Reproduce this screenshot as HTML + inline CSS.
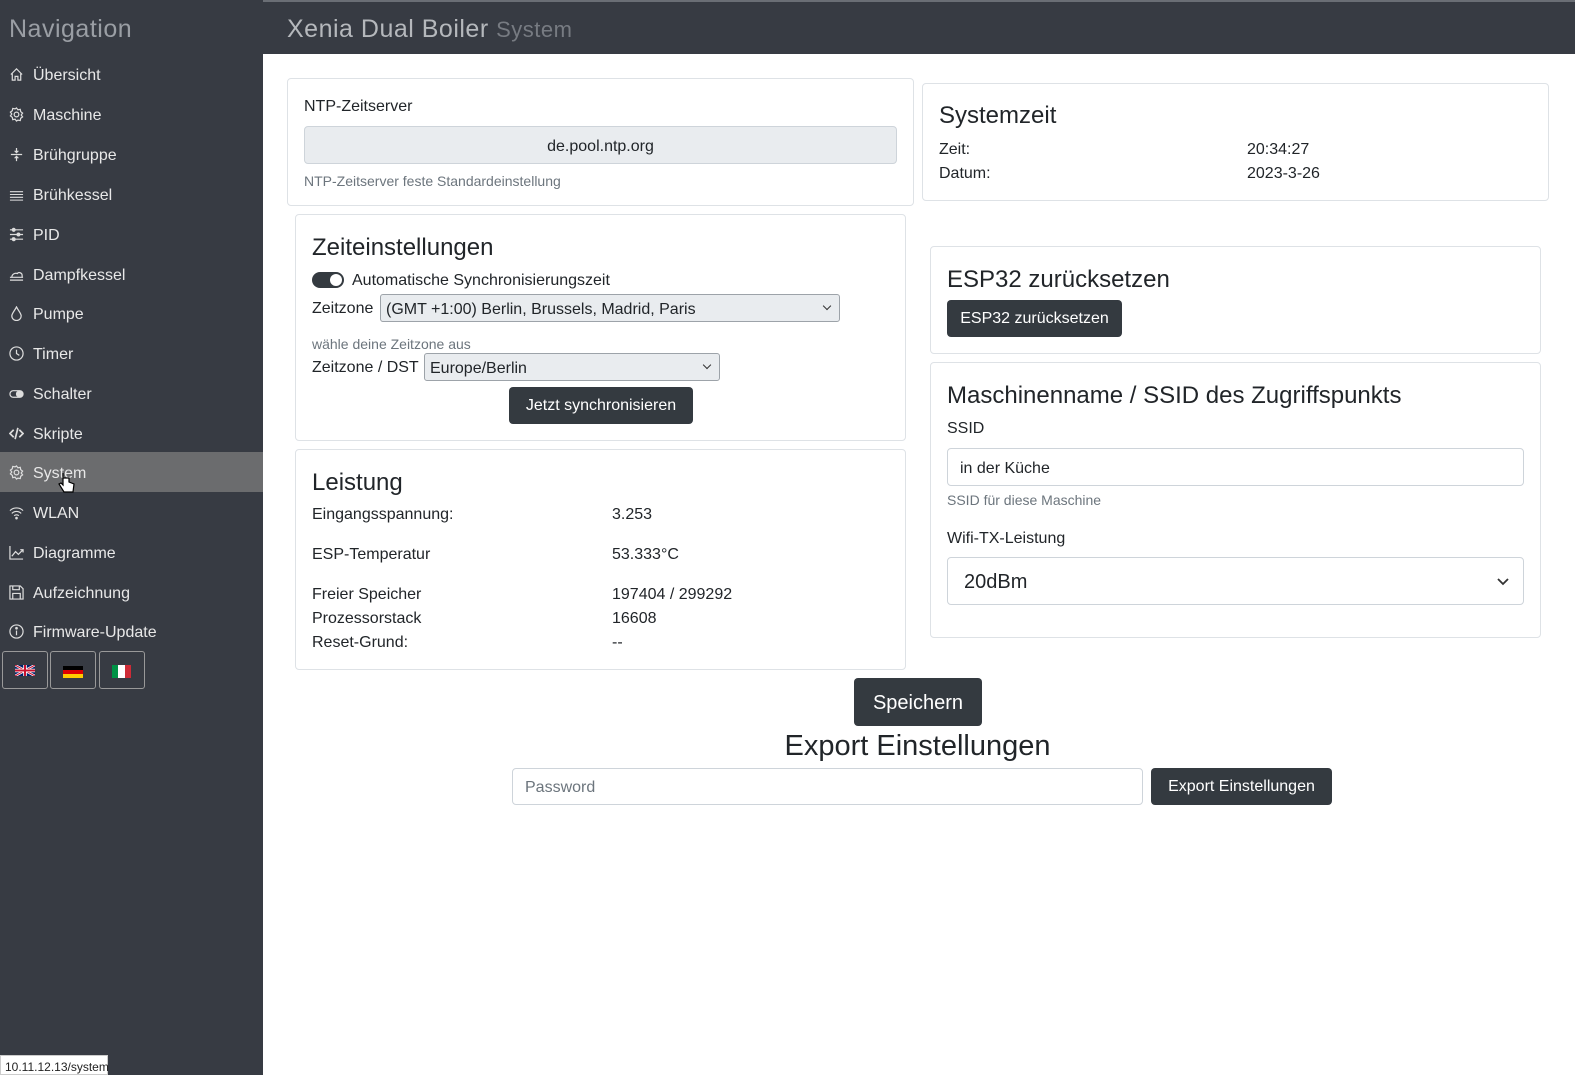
<!DOCTYPE html>
<html><head><meta charset="utf-8"><style>
*{box-sizing:border-box;margin:0;padding:0}
body{width:1575px;height:1075px;position:relative;overflow:hidden;background:#fff;font-family:"Liberation Sans",sans-serif;color:#212529;font-size:16px}
.a{position:absolute}
#top{left:0;top:0;width:1575px;height:54px;background:#373b43;border-top:2px solid #6a6e75}
#side{left:0;top:0;width:263px;height:1075px;background:#373b43}
.nav{position:absolute;left:0;width:263px;height:40px;color:#e8e8e8;font-size:16px;line-height:44px;padding-left:33px}
.nav svg{position:absolute;left:9px;top:13px}
.card{position:absolute;border:1px solid #dee2e6;border-radius:4px;background:#fff}
h3{position:absolute;font-weight:400;font-size:24px;color:#212529;margin-top:3px}
.sel{position:absolute;background:#e9ecef;border:1px solid #9da3a9;border-radius:3px;font-size:16px;line-height:29px;padding-left:5px}
.sel:after{content:"";position:absolute;right:9px;top:8px;width:5px;height:5px;border-right:1.5px solid #333;border-bottom:1.5px solid #333;transform:rotate(45deg)}
.btn{position:absolute;background:#343a40;color:#fff;border-radius:4px;text-align:center;font-size:16px}
.t{position:absolute;white-space:nowrap;margin-top:2px}
.flag{position:absolute;top:651px;width:46px;height:38px;border:1px solid #999;border-radius:3px}
</style></head><body>
<div id="top" class="a"></div>
<div id="side" class="a"></div>
<div class="t" style="left:9px;top:13px;font-size:25px;color:#9a9ea4;letter-spacing:.5px">Navigation</div>
<div class="t" style="left:287px;top:13px;font-size:25px;color:#b5b8bc;letter-spacing:.5px">Xenia Dual Boiler <span style="font-size:22px;color:#777b82">System</span></div>

<div class="a" style="left:0;top:452px;width:263px;height:40px;background:#6b6c6e"></div>
<div class="nav" style="top:54px"><svg width="15" height="15" viewBox="0 0 16 16" fill="none" stroke="#ddd" stroke-width="1.3"><path d="M2 8L8 2l6 6M3.5 7v7h3v-4h3v4h3V7"/></svg>Übersicht</div>
<div class="nav" style="top:94px"><svg width="15" height="15" viewBox="0 0 16 16" fill="none" stroke="#ddd" stroke-width="1.3"><circle cx="8" cy="8" r="2.5"/><path d="M8 1l1.5 2 2.5-.5.5 2.5 2 1.5-1.5 2 1.5 2-2 1.5-.5 2.5-2.5-.5L8 15l-1.5-2-2.5.5-.5-2.5-2-1.5 1.5-2-1.5-2 2-1.5.5-2.5 2.5.5z"/></svg>Maschine</div>
<div class="nav" style="top:134px"><svg width="15" height="15" viewBox="0 0 16 16" fill="none" stroke="#ddd" stroke-width="1.3"><path d="M2 8h12M8 1v5M6 4l2 2 2-2M8 15v-5M6 12l2-2 2 2"/></svg>Brühgruppe</div>
<div class="nav" style="top:174px"><svg width="15" height="15" viewBox="0 0 16 16" fill="none" stroke="#ddd" stroke-width="1.1"><path d="M1 5h14M1 8h14M1 11h14M1 14h14"/></svg>Brühkessel</div>
<div class="nav" style="top:214px"><svg width="15" height="15" viewBox="0 0 16 16" fill="none" stroke="#ddd" stroke-width="1.3"><path d="M1 3h14M1 8h14M1 13h14"/><circle cx="5" cy="3" r="1.5" fill="#ddd"/><circle cx="10" cy="8" r="1.5" fill="#ddd"/><circle cx="5" cy="13" r="1.5" fill="#ddd"/></svg>PID</div>
<div class="nav" style="top:254px"><svg width="15" height="15" viewBox="0 0 16 16" fill="none" stroke="#ddd" stroke-width="1.3"><path d="M1 14h14M3 11c0-3 3-5 6-4 1-2 5-1 5 2v2M1 11h14"/></svg>Dampfkessel</div>
<div class="nav" style="top:293px"><svg width="15" height="15" viewBox="0 0 16 16" fill="none" stroke="#ddd" stroke-width="1.3"><path d="M8 1C6 5 3 8 3 10.5a5 5 0 0010 0C13 8 10 5 8 1z"/></svg>Pumpe</div>
<div class="nav" style="top:333px"><svg width="15" height="15" viewBox="0 0 16 16" fill="none" stroke="#ddd" stroke-width="1.3"><circle cx="8" cy="8" r="7"/><path d="M8 4v4l3 2"/></svg>Timer</div>
<div class="nav" style="top:373px"><svg width="15" height="15" viewBox="0 0 16 16" fill="none" stroke="#ddd" stroke-width="1.3"><rect x="1" y="5" width="14" height="7" rx="3.5"/><circle cx="11" cy="8.5" r="3" fill="#ddd"/></svg>Schalter</div>
<div class="nav" style="top:413px"><svg width="15" height="15" viewBox="0 0 16 16" fill="none" stroke="#ddd" stroke-width="1.8"><path d="M5 4L1 8l4 4M11 4l4 4-4 4M9.5 2l-3 12"/></svg>Skripte</div>
<div class="nav" style="top:452px"><svg width="15" height="15" viewBox="0 0 16 16" fill="none" stroke="#ddd" stroke-width="1.3"><circle cx="8" cy="8" r="2.5"/><path d="M8 1l1.5 2 2.5-.5.5 2.5 2 1.5-1.5 2 1.5 2-2 1.5-.5 2.5-2.5-.5L8 15l-1.5-2-2.5.5-.5-2.5-2-1.5 1.5-2-1.5-2 2-1.5.5-2.5 2.5.5z"/></svg>System</div>
<svg class="a" style="left:58px;top:472px" width="18" height="22" viewBox="0 0 18 22"><path d="M5 1v12l-2-2-2 1 5 8h9l1-8-5-2V6H5z" fill="#fff" stroke="#000" stroke-width="1.2"/></svg>
<div class="nav" style="top:492px"><svg width="15" height="15" viewBox="0 0 16 16" fill="none" stroke="#ddd" stroke-width="1.2"><path d="M1 6a10 10 0 0114 0M3 9a7 7 0 0110 0M5.5 11.5a3.5 3.5 0 015 0"/><circle cx="8" cy="14" r=".8" fill="#ddd"/></svg>WLAN</div>
<div class="nav" style="top:532px"><svg width="15" height="15" viewBox="0 0 16 16" fill="none" stroke="#ddd" stroke-width="1.3"><path d="M1 1v14h14M3 12l4-5 3 3 5-5M12 5h3v3"/></svg>Diagramme</div>
<div class="nav" style="top:572px"><svg width="15" height="15" viewBox="0 0 16 16" fill="none" stroke="#ddd" stroke-width="1.3"><path d="M1 1h11l3 3v11H1zM4 1v4h7V1M4 15V9h8v6"/></svg>Aufzeichnung</div>
<div class="nav" style="top:611px"><svg width="15" height="15" viewBox="0 0 16 16" fill="none" stroke="#ddd" stroke-width="1.3"><circle cx="8" cy="8" r="7"/><path d="M8 7v5"/><circle cx="8" cy="4.5" r=".8" fill="#ddd"/></svg>Firmware-Update</div>
<div class="flag" style="left:2px"><svg class="a" style="left:12px;top:13px" width="20" height="11" viewBox="0 0 20 11"><rect width="20" height="11" fill="#012169"/><path d="M0 0L20 11M20 0L0 11" stroke="#fff" stroke-width="2.5"/><path d="M0 0L20 11M20 0L0 11" stroke="#c8102e" stroke-width="1"/><path d="M10 0v11M0 5.5h20" stroke="#fff" stroke-width="3.5"/><path d="M10 0v11M0 5.5h20" stroke="#c8102e" stroke-width="2"/></svg></div>
<div class="flag" style="left:50px"><div class="a" style="left:12px;top:14px;width:20px;height:4px;background:#000"></div><div class="a" style="left:12px;top:18px;width:20px;height:4px;background:#d00"></div><div class="a" style="left:12px;top:22px;width:20px;height:4px;background:#fc0"></div></div>
<div class="flag" style="left:99px"><div class="a" style="left:12px;top:13px;width:6px;height:13px;background:#009246"></div><div class="a" style="left:18px;top:13px;width:7px;height:13px;background:#fff"></div><div class="a" style="left:25px;top:13px;width:6px;height:13px;background:#ce2b37"></div></div>
<div class="a" style="left:0;top:1055px;width:108px;height:20px;background:#fff;border:1px solid #ccc;font-size:12px;line-height:22px;padding-left:4px;color:#222;white-space:nowrap">10.11.12.13/system</div>

<!-- NTP -->
<div class="card" style="left:287px;top:78px;width:627px;height:128px"></div>
<div class="t" style="left:304px;top:96px">NTP-Zeitserver</div>
<div class="a" style="left:304px;top:126px;width:593px;height:38px;background:#e9ecef;border:1px solid #ced4da;border-radius:4px;text-align:center;line-height:39px">de.pool.ntp.org</div>
<div class="t" style="left:304px;top:171px;font-size:14px;color:#6c757d">NTP-Zeitserver feste Standardeinstellung</div>

<!-- Systemzeit -->
<div class="card" style="left:922px;top:83px;width:627px;height:118px"></div>
<h3 style="left:939px;top:99px">Systemzeit</h3>
<div class="t" style="left:939px;top:139px">Zeit:</div><div class="t" style="left:1247px;top:139px">20:34:27</div>
<div class="t" style="left:939px;top:163px">Datum:</div><div class="t" style="left:1247px;top:163px">2023-3-26</div>

<!-- Zeiteinstellungen -->
<div class="card" style="left:295px;top:214px;width:611px;height:227px"></div>
<h3 style="left:312px;top:231px">Zeiteinstellungen</h3>
<div class="a" style="left:312px;top:272px;width:32px;height:16px;border-radius:8px;background:#343a40"><div class="a" style="left:18px;top:2px;width:12px;height:12px;border-radius:6px;background:#fff"></div></div>
<div class="t" style="left:352px;top:270px">Automatische Synchronisierungszeit</div>
<div class="t" style="left:312px;top:298px">Zeitzone</div>
<div class="sel" style="left:380px;top:294px;width:460px;height:28px">(GMT +1:00) Berlin, Brussels, Madrid, Paris</div>
<div class="t" style="left:312px;top:334px;font-size:14px;color:#6c757d">wähle deine Zeitzone aus</div>
<div class="t" style="left:312px;top:357px">Zeitzone / DST</div>
<div class="sel" style="left:424px;top:353px;width:296px;height:28px">Europe/Berlin</div>
<div class="btn" style="left:509px;top:387px;width:184px;height:37px;line-height:38px">Jetzt synchronisieren</div>

<!-- ESP32 -->
<div class="card" style="left:930px;top:246px;width:611px;height:108px"></div>
<h3 style="left:947px;top:263px">ESP32 zurücksetzen</h3>
<div class="btn" style="left:947px;top:300px;width:175px;height:37px;line-height:38px">ESP32 zurücksetzen</div>

<!-- Leistung -->
<div class="card" style="left:295px;top:449px;width:611px;height:221px"></div>
<h3 style="left:312px;top:466px">Leistung</h3>
<div class="t" style="left:312px;top:504px">Eingangsspannung:</div><div class="t" style="left:612px;top:504px">3.253</div>
<div class="t" style="left:312px;top:544px">ESP-Temperatur</div><div class="t" style="left:612px;top:544px">53.333°C</div>
<div class="t" style="left:312px;top:584px">Freier Speicher</div><div class="t" style="left:612px;top:584px">197404 / 299292</div>
<div class="t" style="left:312px;top:608px">Prozessorstack</div><div class="t" style="left:612px;top:608px">16608</div>
<div class="t" style="left:312px;top:632px">Reset-Grund:</div><div class="t" style="left:612px;top:632px">--</div>

<!-- Maschinenname -->
<div class="card" style="left:930px;top:362px;width:611px;height:276px"></div>
<h3 style="left:947px;top:379px">Maschinenname / SSID des Zugriffspunkts</h3>
<div class="t" style="left:947px;top:418px">SSID</div>
<div class="a" style="left:947px;top:448px;width:577px;height:38px;border:1px solid #ced4da;border-radius:4px;line-height:39px;padding-left:12px">in der Küche</div>
<div class="t" style="left:947px;top:490px;font-size:14px;color:#6c757d">SSID für diese Maschine</div>
<div class="t" style="left:947px;top:528px">Wifi-TX-Leistung</div>
<div class="a" style="left:947px;top:557px;width:577px;height:48px;border:1px solid #ced4da;border-radius:4px;line-height:49px;padding-left:16px;font-size:20px">20dBm<svg class="a" style="right:14px;top:18px" width="12" height="10" viewBox="0 0 12 10"><path d="M1 3l5 5 5-5" fill="none" stroke="#333" stroke-width="1.8"/></svg></div>

<div class="btn" style="left:854px;top:678px;width:128px;height:48px;line-height:50px;font-size:20px">Speichern</div>
<div class="t" style="left:0;width:1835px;text-align:center;top:728px;font-size:29px">Export Einstellungen</div>
<div class="a" style="left:512px;top:768px;width:631px;height:37px;border:1px solid #ced4da;border-radius:4px;line-height:38px;padding-left:12px;color:#6c757d">Password</div>
<div class="btn" style="left:1151px;top:768px;width:181px;height:37px;line-height:38px">Export Einstellungen</div>
</body></html>
